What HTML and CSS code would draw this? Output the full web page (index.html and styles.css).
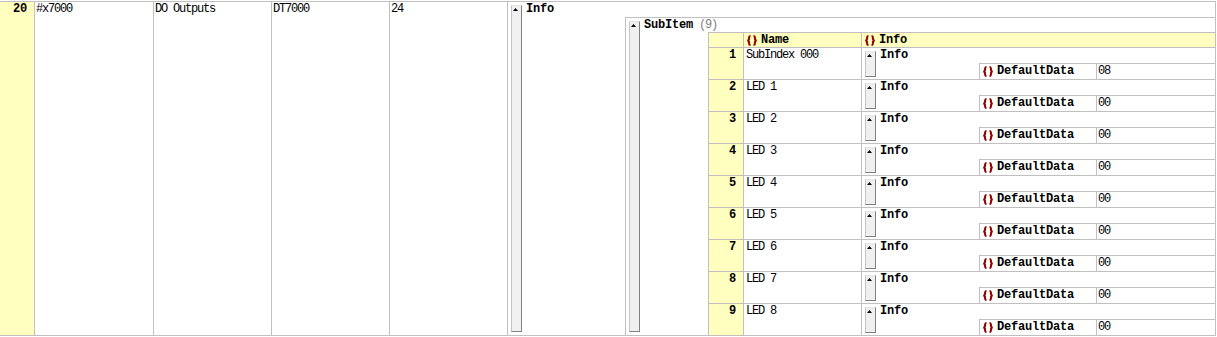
FILE: index.html
```html
<!DOCTYPE html>
<html>
<head>
<meta charset="utf-8">
<link rel="stylesheet" href="styles.css">
</head>
<body>
<div class="grid">
  <div class="rh b">20</div>
  <div class="c c1">#x7000</div>
  <div class="c c2">DO Outputs</div>
  <div class="c c2">DT7000</div>
  <div class="c c2">24</div>
  <div class="el">
    <div class="bar"><svg class="arr" width="5" height="3" viewBox="0 0 5 3"><path d="M0 3L2.5 0L5 3Z"/></svg></div>
    <div class="elbody">
      <div class="ln b">Info</div>
      <div class="sub">
        <div class="bar"><svg class="arr" width="5" height="3" viewBox="0 0 5 3"><path d="M0 3L2.5 0L5 3Z"/></svg></div>
        <div class="subbody">
          <div class="ln ln14"><span class="b">SubItem</span> <span class="cnt">(9)</span></div>
          <div class="tbl">
            <div class="thead">
              <div class="rn"></div>
              <div class="nm"><svg class="ic" width="12" height="11" viewBox="0 0 12 11"><path d="M4.5 1C3 1 3 2 3 3.5V4C3 5 2.5 5.5 1.2 5.5C2.5 5.5 3 6 3 7V7.5C3 9 3 10 4.5 10M7.5 1C9 1 9 2 9 3.5V4C9 5 9.5 5.5 10.8 5.5C9.5 5.5 9 6 9 7V7.5C9 9 9 10 7.5 10"/></svg><span class="b">Name</span></div>
              <div class="inf"><svg class="ic" width="12" height="11" viewBox="0 0 12 11"><path d="M4.5 1C3 1 3 2 3 3.5V4C3 5 2.5 5.5 1.2 5.5C2.5 5.5 3 6 3 7V7.5C3 9 3 10 4.5 10M7.5 1C9 1 9 2 9 3.5V4C9 5 9.5 5.5 10.8 5.5C9.5 5.5 9 6 9 7V7.5C9 9 9 10 7.5 10"/></svg><span class="b">Info</span></div>
            </div>
            <div class="tr">
              <div class="rn b">1</div><div class="nm">SubIndex 000</div>
              <div class="inf"><div class="bar sm"><svg class="arr" width="5" height="3" viewBox="0 0 5 3"><path d="M0 3L2.5 0L5 3Z"/></svg></div><div class="elbody"><div class="ln b">Info</div><div class="dd"><div class="ddk"><svg class="ic" width="12" height="11" viewBox="0 0 12 11"><path d="M4.5 1C3 1 3 2 3 3.5V4C3 5 2.5 5.5 1.2 5.5C2.5 5.5 3 6 3 7V7.5C3 9 3 10 4.5 10M7.5 1C9 1 9 2 9 3.5V4C9 5 9.5 5.5 10.8 5.5C9.5 5.5 9 6 9 7V7.5C9 9 9 10 7.5 10"/></svg><span class="b">DefaultData</span></div><div class="ddv">08</div></div></div></div>
            </div>
            <div class="tr">
              <div class="rn b">2</div><div class="nm">LED 1</div>
              <div class="inf"><div class="bar sm"><svg class="arr" width="5" height="3" viewBox="0 0 5 3"><path d="M0 3L2.5 0L5 3Z"/></svg></div><div class="elbody"><div class="ln b">Info</div><div class="dd"><div class="ddk"><svg class="ic" width="12" height="11" viewBox="0 0 12 11"><path d="M4.5 1C3 1 3 2 3 3.5V4C3 5 2.5 5.5 1.2 5.5C2.5 5.5 3 6 3 7V7.5C3 9 3 10 4.5 10M7.5 1C9 1 9 2 9 3.5V4C9 5 9.5 5.5 10.8 5.5C9.5 5.5 9 6 9 7V7.5C9 9 9 10 7.5 10"/></svg><span class="b">DefaultData</span></div><div class="ddv">00</div></div></div></div>
            </div>
            <div class="tr">
              <div class="rn b">3</div><div class="nm">LED 2</div>
              <div class="inf"><div class="bar sm"><svg class="arr" width="5" height="3" viewBox="0 0 5 3"><path d="M0 3L2.5 0L5 3Z"/></svg></div><div class="elbody"><div class="ln b">Info</div><div class="dd"><div class="ddk"><svg class="ic" width="12" height="11" viewBox="0 0 12 11"><path d="M4.5 1C3 1 3 2 3 3.5V4C3 5 2.5 5.5 1.2 5.5C2.5 5.5 3 6 3 7V7.5C3 9 3 10 4.5 10M7.5 1C9 1 9 2 9 3.5V4C9 5 9.5 5.5 10.8 5.5C9.5 5.5 9 6 9 7V7.5C9 9 9 10 7.5 10"/></svg><span class="b">DefaultData</span></div><div class="ddv">00</div></div></div></div>
            </div>
            <div class="tr">
              <div class="rn b">4</div><div class="nm">LED 3</div>
              <div class="inf"><div class="bar sm"><svg class="arr" width="5" height="3" viewBox="0 0 5 3"><path d="M0 3L2.5 0L5 3Z"/></svg></div><div class="elbody"><div class="ln b">Info</div><div class="dd"><div class="ddk"><svg class="ic" width="12" height="11" viewBox="0 0 12 11"><path d="M4.5 1C3 1 3 2 3 3.5V4C3 5 2.5 5.5 1.2 5.5C2.5 5.5 3 6 3 7V7.5C3 9 3 10 4.5 10M7.5 1C9 1 9 2 9 3.5V4C9 5 9.5 5.5 10.8 5.5C9.5 5.5 9 6 9 7V7.5C9 9 9 10 7.5 10"/></svg><span class="b">DefaultData</span></div><div class="ddv">00</div></div></div></div>
            </div>
            <div class="tr">
              <div class="rn b">5</div><div class="nm">LED 4</div>
              <div class="inf"><div class="bar sm"><svg class="arr" width="5" height="3" viewBox="0 0 5 3"><path d="M0 3L2.5 0L5 3Z"/></svg></div><div class="elbody"><div class="ln b">Info</div><div class="dd"><div class="ddk"><svg class="ic" width="12" height="11" viewBox="0 0 12 11"><path d="M4.5 1C3 1 3 2 3 3.5V4C3 5 2.5 5.5 1.2 5.5C2.5 5.5 3 6 3 7V7.5C3 9 3 10 4.5 10M7.5 1C9 1 9 2 9 3.5V4C9 5 9.5 5.5 10.8 5.5C9.5 5.5 9 6 9 7V7.5C9 9 9 10 7.5 10"/></svg><span class="b">DefaultData</span></div><div class="ddv">00</div></div></div></div>
            </div>
            <div class="tr">
              <div class="rn b">6</div><div class="nm">LED 5</div>
              <div class="inf"><div class="bar sm"><svg class="arr" width="5" height="3" viewBox="0 0 5 3"><path d="M0 3L2.5 0L5 3Z"/></svg></div><div class="elbody"><div class="ln b">Info</div><div class="dd"><div class="ddk"><svg class="ic" width="12" height="11" viewBox="0 0 12 11"><path d="M4.5 1C3 1 3 2 3 3.5V4C3 5 2.5 5.5 1.2 5.5C2.5 5.5 3 6 3 7V7.5C3 9 3 10 4.5 10M7.5 1C9 1 9 2 9 3.5V4C9 5 9.5 5.5 10.8 5.5C9.5 5.5 9 6 9 7V7.5C9 9 9 10 7.5 10"/></svg><span class="b">DefaultData</span></div><div class="ddv">00</div></div></div></div>
            </div>
            <div class="tr">
              <div class="rn b">7</div><div class="nm">LED 6</div>
              <div class="inf"><div class="bar sm"><svg class="arr" width="5" height="3" viewBox="0 0 5 3"><path d="M0 3L2.5 0L5 3Z"/></svg></div><div class="elbody"><div class="ln b">Info</div><div class="dd"><div class="ddk"><svg class="ic" width="12" height="11" viewBox="0 0 12 11"><path d="M4.5 1C3 1 3 2 3 3.5V4C3 5 2.5 5.5 1.2 5.5C2.5 5.5 3 6 3 7V7.5C3 9 3 10 4.5 10M7.5 1C9 1 9 2 9 3.5V4C9 5 9.5 5.5 10.8 5.5C9.5 5.5 9 6 9 7V7.5C9 9 9 10 7.5 10"/></svg><span class="b">DefaultData</span></div><div class="ddv">00</div></div></div></div>
            </div>
            <div class="tr">
              <div class="rn b">8</div><div class="nm">LED 7</div>
              <div class="inf"><div class="bar sm"><svg class="arr" width="5" height="3" viewBox="0 0 5 3"><path d="M0 3L2.5 0L5 3Z"/></svg></div><div class="elbody"><div class="ln b">Info</div><div class="dd"><div class="ddk"><svg class="ic" width="12" height="11" viewBox="0 0 12 11"><path d="M4.5 1C3 1 3 2 3 3.5V4C3 5 2.5 5.5 1.2 5.5C2.5 5.5 3 6 3 7V7.5C3 9 3 10 4.5 10M7.5 1C9 1 9 2 9 3.5V4C9 5 9.5 5.5 10.8 5.5C9.5 5.5 9 6 9 7V7.5C9 9 9 10 7.5 10"/></svg><span class="b">DefaultData</span></div><div class="ddv">00</div></div></div></div>
            </div>
            <div class="tr">
              <div class="rn b">9</div><div class="nm">LED 8</div>
              <div class="inf"><div class="bar sm"><svg class="arr" width="5" height="3" viewBox="0 0 5 3"><path d="M0 3L2.5 0L5 3Z"/></svg></div><div class="elbody"><div class="ln b">Info</div><div class="dd"><div class="ddk"><svg class="ic" width="12" height="11" viewBox="0 0 12 11"><path d="M4.5 1C3 1 3 2 3 3.5V4C3 5 2.5 5.5 1.2 5.5C2.5 5.5 3 6 3 7V7.5C3 9 3 10 4.5 10M7.5 1C9 1 9 2 9 3.5V4C9 5 9.5 5.5 10.8 5.5C9.5 5.5 9 6 9 7V7.5C9 9 9 10 7.5 10"/></svg><span class="b">DefaultData</span></div><div class="ddv">00</div></div></div></div>
            </div>
          </div>
        </div>
      </div>
    </div>
  </div>
</div>
</body>
</html>
```

FILE: styles.css
```css
* { box-sizing: border-box; }

body {
  margin: 0;
  background: #fff;
  color: #000;
  font-family: "Liberation Mono", "DejaVu Sans Mono", monospace;
  font-size: 12px;
  letter-spacing: -1.2px;
}

.b {
  font-weight: bold;
  font-size: 12px;
  letter-spacing: -0.2px;
}

.grid {
  display: flex;
  width: 1216px;
  margin-top: 1px;
  border-top: 1px solid #c0c0c0;
  border-bottom: 1px solid #c0c0c0;
  border-right: 1px solid #c0c0c0;
}

.rh {
  width: 35px;
  flex: none;
  background: #ffffc0;
  border-right: 1px solid #c0c0c0;
  text-align: right;
  padding-right: 7px;
  line-height: 15px;
}

.c {
  flex: none;
  border-right: 1px solid #c0c0c0;
  line-height: 15px;
  padding-left: 1px;
  white-space: nowrap;
}

.c1 { width: 119px; }
.c2 { width: 118px; }

.el {
  flex: 1;
  display: flex;
}

.bar {
  flex: none;
  width: 11px;
  margin: 3px 0 3px 3px;
  background: #f0f0f0;
  border-style: solid;
  border-width: 1px;
  border-color: #e4e4e4 #808080 #808080 #c4c4c4;
}

.bar.sm {
  margin: 3px 0 2px 3px;
}

.arr {
  display: block;
  margin: 2px 0 0 1px;
  fill: #000;
}

.elbody {
  flex: 1;
  display: flex;
  flex-direction: column;
  margin-left: 4px;
  min-width: 0;
}

.ln {
  height: 15px;
  line-height: 15px;
  white-space: nowrap;
}

.ln14 {
  height: 14px;
  line-height: 14px;
}

.cnt {
  color: #808080;
}

.sub {
  flex: 1;
  display: flex;
  margin-left: 99px;
  border-top: 1px solid #c0c0c0;
  border-left: 1px solid #c0c0c0;
}

.subbody {
  flex: 1;
  display: flex;
  flex-direction: column;
  margin-left: 4px;
}

.tbl {
  margin-left: 64px;
  border-left: 1px solid #c0c0c0;
}

.thead {
  display: flex;
  height: 15px;
  border-top: 1px solid #c0c0c0;
  background: #ffffc0;
  line-height: 14px;
}

.tr {
  display: flex;
  height: 32px;
  border-top: 1px solid #c0c0c0;
}

.rn {
  width: 35px;
  flex: none;
  background: #ffffc0;
  border-right: 1px solid #c0c0c0;
  text-align: right;
  padding-right: 7px;
  line-height: 15px;
}

.thead .rn { line-height: 14px; }

.nm {
  width: 118px;
  flex: none;
  border-right: 1px solid #c0c0c0;
  padding-left: 2px;
  line-height: 15px;
  white-space: nowrap;
  display: flex;
  align-items: flex-start;
}

.thead .nm, .thead .inf {
  align-items: center;
  line-height: 14px;
}

.inf {
  flex: 1;
  display: flex;
}

.thead .inf {
  padding-left: 2px;
}

.ic {
  flex: none;
  display: block;
  margin-right: 3px;
  fill: none;
  stroke: #990000;
  stroke-width: 2;
}

.dd {
  display: flex;
  height: 16px;
  margin-left: 99px;
  border-top: 1px solid #c0c0c0;
  border-left: 1px solid #c0c0c0;
}

.ddk {
  width: 117px;
  flex: none;
  display: flex;
  align-items: center;
  padding-left: 2px;
  border-right: 1px solid #c0c0c0;
  line-height: 15px;
}

.ddv {
  flex: 1;
  padding-left: 1px;
  line-height: 15px;
}
```
